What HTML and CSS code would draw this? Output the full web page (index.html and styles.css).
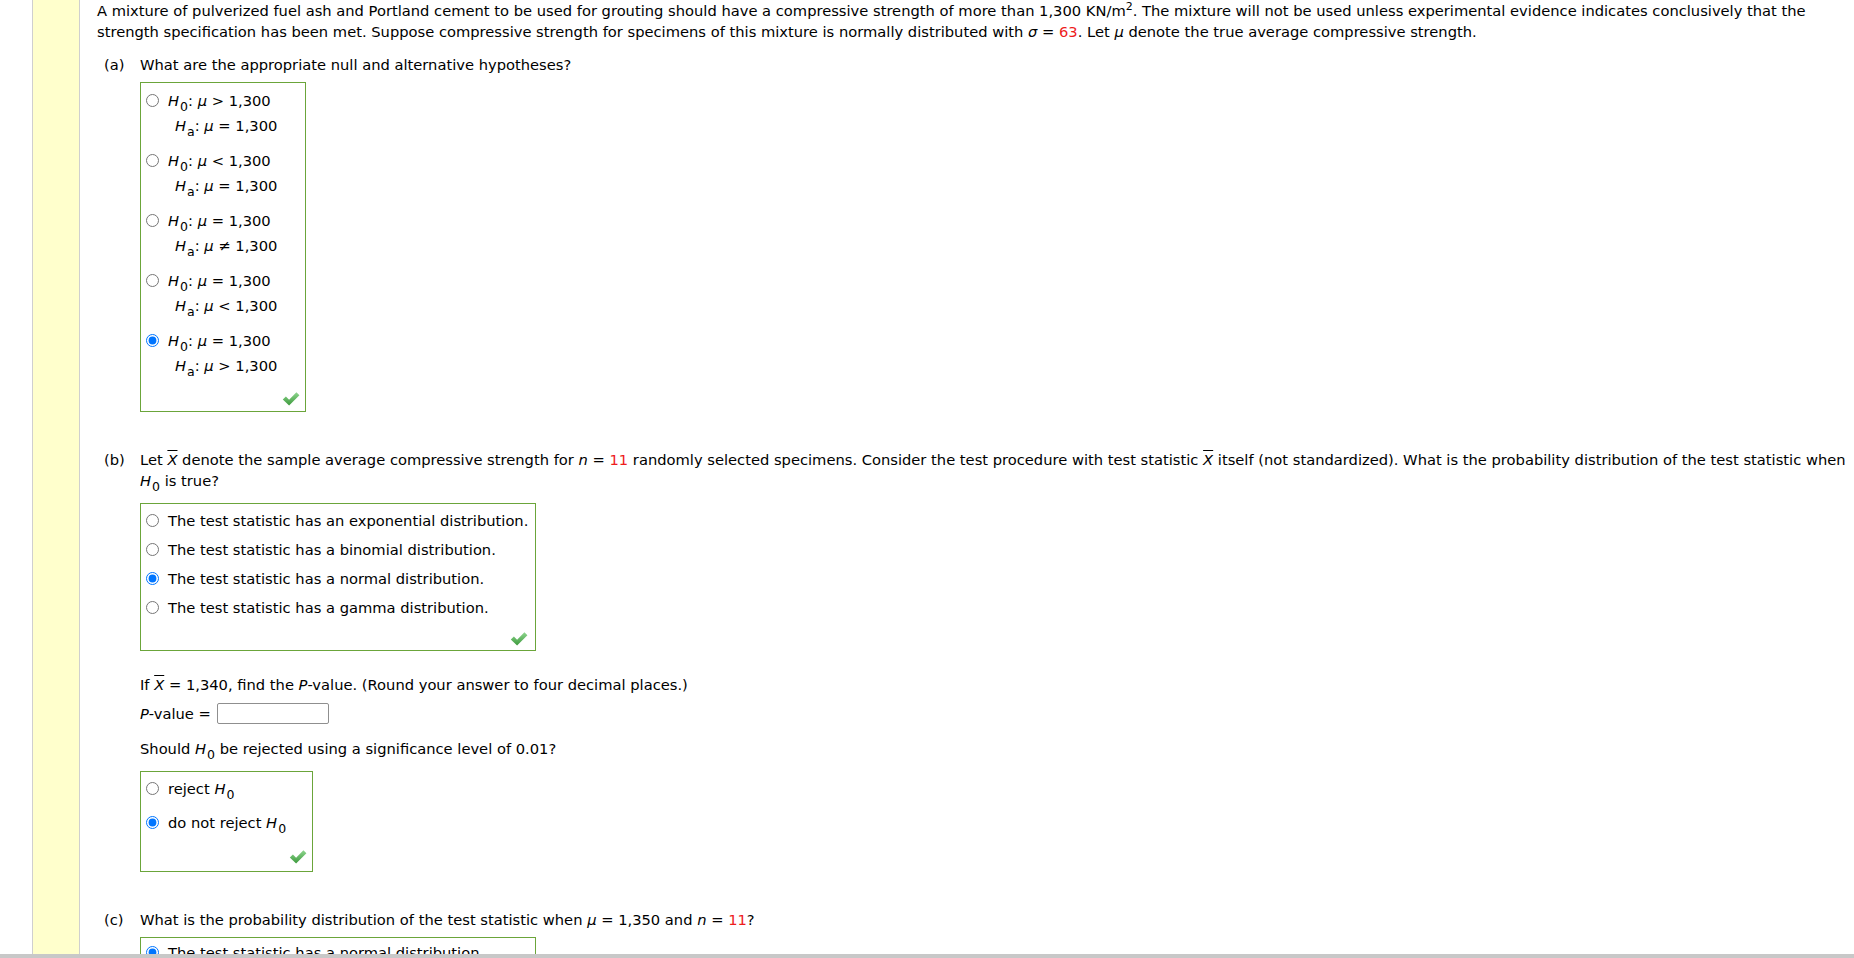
FILE: index.html
```html
<!DOCTYPE html>
<html lang="en">
<head>
<meta charset="utf-8">
<title>Hypothesis test question</title>
<link rel="stylesheet" href="styles.css">
</head>
<body>
<div class="page">
  <div class="gutter"></div>
  <div class="strip"></div>
  <main class="content">
    <p class="intro">A mixture of pulverized fuel ash and Portland cement to be used for grouting should have a compressive strength of more than 1,300 KN/m<sup>2</sup>. The mixture will not be used unless experimental evidence indicates conclusively that the strength specification has been met. Suppose compressive strength for specimens of this mixture is normally distributed with <i>σ</i> = <span class="red">63</span>. Let <i>μ</i> denote the true average compressive strength.</p>

    <section class="part part-a">
      <div class="part-label">(a)</div>
      <div class="part-body">
        <p class="q q-a">What are the appropriate null and alternative hypotheses?</p>
        <div class="choices hyp">
          <label class="opt"><input type="radio" name="a"><span class="lines"><span class="line"><i>H</i><sub>0</sub>: <i>μ</i> &gt; 1,300</span><span class="line ind"><i>H</i><sub>a</sub>: <i>μ</i> = 1,300</span></span></label>
          <label class="opt"><input type="radio" name="a"><span class="lines"><span class="line"><i>H</i><sub>0</sub>: <i>μ</i> &lt; 1,300</span><span class="line ind"><i>H</i><sub>a</sub>: <i>μ</i> = 1,300</span></span></label>
          <label class="opt"><input type="radio" name="a"><span class="lines"><span class="line"><i>H</i><sub>0</sub>: <i>μ</i> = 1,300</span><span class="line ind"><i>H</i><sub>a</sub>: <i>μ</i> ≠ 1,300</span></span></label>
          <label class="opt"><input type="radio" name="a"><span class="lines"><span class="line"><i>H</i><sub>0</sub>: <i>μ</i> = 1,300</span><span class="line ind"><i>H</i><sub>a</sub>: <i>μ</i> &lt; 1,300</span></span></label>
          <label class="opt"><input type="radio" name="a" checked><span class="lines"><span class="line"><i>H</i><sub>0</sub>: <i>μ</i> = 1,300</span><span class="line ind"><i>H</i><sub>a</sub>: <i>μ</i> &gt; 1,300</span></span></label>
          <div class="check-row"><svg class="check" width="18" height="15" viewBox="0 0 18 15"><defs><linearGradient id="g1" x1="0" y1="0" x2="0" y2="1"><stop offset="0" stop-color="#8fd68f"/><stop offset="1" stop-color="#3d9a3d"/></linearGradient></defs><path d="M0.8 8.6 L3.9 5.6 L7.1 8.7 L14.4 1.2 L17.4 4.2 L7.1 14.4 Z" fill="url(#g1)"/></svg></div>
        </div>
      </div>
    </section>

    <section class="part part-b">
      <div class="part-label">(b)</div>
      <div class="part-body">
        <p class="q">Let <span class="xbar">X</span> denote the sample average compressive strength for <i>n</i> = <span class="red">11</span> randomly selected specimens. Consider the test procedure with test statistic <span class="xbar">X</span> itself (not standardized). What is the probability distribution of the test statistic when <i>H</i><sub>0</sub> is true?</p>
        <div class="choices dist">
          <label class="opt"><input type="radio" name="b"><span>The test statistic has an exponential distribution.</span></label>
          <label class="opt"><input type="radio" name="b"><span>The test statistic has a binomial distribution.</span></label>
          <label class="opt"><input type="radio" name="b" checked><span>The test statistic has a normal distribution.</span></label>
          <label class="opt"><input type="radio" name="b"><span>The test statistic has a gamma distribution.</span></label>
          <div class="check-row"><svg class="check" width="18" height="15" viewBox="0 0 18 15"><defs><linearGradient id="g2" x1="0" y1="0" x2="0" y2="1"><stop offset="0" stop-color="#8fd68f"/><stop offset="1" stop-color="#3d9a3d"/></linearGradient></defs><path d="M0.8 8.6 L3.9 5.6 L7.1 8.7 L14.4 1.2 L17.4 4.2 L7.1 14.4 Z" fill="url(#g2)"/></svg></div>
        </div>

        <p class="q ifx">If <span class="xbar">X</span> = 1,340, find the <i>P</i>-value. (Round your answer to four decimal places.)</p>
        <div class="pval"><span><i>P</i>-value =</span><input class="pinput" type="text" aria-label="P-value"></div>
        <p class="q should">Should <i>H</i><sub>0</sub> be rejected using a significance level of 0.01?</p>
        <div class="choices rej">
          <label class="opt"><input type="radio" name="r"><span>reject <i>H</i><sub>0</sub></span></label>
          <label class="opt"><input type="radio" name="r" checked><span>do not reject <i>H</i><sub>0</sub></span></label>
          <div class="check-row"><svg class="check" width="18" height="15" viewBox="0 0 18 15"><defs><linearGradient id="g3" x1="0" y1="0" x2="0" y2="1"><stop offset="0" stop-color="#8fd68f"/><stop offset="1" stop-color="#3d9a3d"/></linearGradient></defs><path d="M0.8 8.6 L3.9 5.6 L7.1 8.7 L14.4 1.2 L17.4 4.2 L7.1 14.4 Z" fill="url(#g3)"/></svg></div>
        </div>
      </div>
    </section>

    <section class="part part-c">
      <div class="part-label">(c)</div>
      <div class="part-body">
        <p class="q q-c">What is the probability distribution of the test statistic when <i>μ</i> = 1,350 and <i>n</i> = <span class="red">11</span>?</p>
        <div class="choices dist dist-c">
          <label class="opt"><input type="radio" name="c" checked><span>The test statistic has a normal distribution.</span></label>
          <label class="opt"><input type="radio" name="c"><span>The test statistic has a binomial distribution.</span></label>
          <label class="opt"><input type="radio" name="c"><span>The test statistic has an exponential distribution.</span></label>
          <label class="opt"><input type="radio" name="c"><span>The test statistic has a gamma distribution.</span></label>
        </div>
      </div>
    </section>
  </main>
</div>
<div class="hbar"></div>
</body>
</html>
```

FILE: styles.css
```css
html, body {
  margin: 0;
  height: 100%;
  overflow: hidden;
  background: #fff;
}

body {
  font-family: "DejaVu Sans", Verdana, sans-serif;
  font-size: 14.7px;
  color: #000;
}

.page {
  display: flex;
  min-height: 100%;
}

.gutter {
  width: 32px;
  flex: none;
}

.strip {
  width: 46px;
  flex: none;
  background: #ffffcc;
  border-left: 1px solid #cfcfcf;
  border-right: 1px solid #cfcfcf;
}

.content {
  flex: 1;
  min-width: 0;
  padding: 0 4px 0 17px;
}

p {
  margin: 0;
}

.intro {
  line-height: 21px;
}

.red {
  color: #ee1c1c;
}

i {
  font-style: italic;
}

sub {
  font-size: 12.5px;
  vertical-align: baseline;
  position: relative;
  top: 5px;
  line-height: 0;
  margin-left: 1px;
}

sup {
  font-size: 11px;
  vertical-align: baseline;
  position: relative;
  top: -6px;
  line-height: 0;
}

.xbar {
  font-style: italic;
  text-decoration: overline;
}

.part {
  display: flex;
}

.part-a {
  margin-top: 12px;
}

.part-b {
  margin-top: 37px;
}

.part-c {
  margin-top: 37px;
}

.part-label {
  width: 36px;
  padding-left: 7px;
  flex: none;
  line-height: 21px;
}

.part-body {
  flex: 1;
  min-width: 0;
}

.q {
  line-height: 21px;
}

.q-a {
  margin-bottom: 7px;
}

.q-c {
  margin-bottom: 7px;
}

.choices {
  border: 1px solid #6ba53a;
  box-sizing: border-box;
}

.opt {
  display: flex;
  align-items: flex-start;
  white-space: nowrap;
}

.opt input {
  flex: none;
  width: 13px;
  height: 13px;
  margin: 0 9px 0 5px;
}

.check-row {
  display: flex;
  justify-content: flex-end;
}

.check {
  display: block;
}

/* (a) hypotheses box */
.hyp {
  width: 166px;
  padding: 5px 5px 5px 0;
}

.hyp .opt + .opt {
  margin-top: 10px;
}

.hyp .opt input {
  margin-top: 6px;
}

.lines {
  display: flex;
  flex-direction: column;
}

.line {
  height: 25px;
  line-height: 25px;
}

.line.ind {
  padding-left: 7px;
}

.hyp .check-row {
  margin-top: 13px;
}

/* distribution boxes */
.dist {
  width: fit-content;
  padding: 2px 7px 4px 0;
  margin-top: 12px;
}

.dist .opt {
  line-height: 29px;
}

.dist .opt input {
  margin-top: 8px;
}

.dist .check-row {
  margin-top: 9px;
}

.dist-c {
  margin-top: 0;
  padding-top: 0;
}

/* P-value */
.ifx {
  margin-top: 23px;
}

.pval {
  display: flex;
  align-items: center;
  height: 24px;
  margin-top: 6px;
}

.pinput {
  width: 112px;
  height: 21px;
  box-sizing: border-box;
  border: 1px solid #8f8f8f;
  border-radius: 2px;
  margin: 0 0 0 6px;
  padding: 0 3px;
  font: inherit;
}

.should {
  margin-top: 13px;
}

/* reject box */
.rej {
  width: 173px;
  padding: 0 5px 7px 0;
  margin-top: 12px;
}

.rej .opt {
  line-height: 34px;
}

.rej .opt input {
  margin-top: 10px;
}

.rej .check-row {
  margin-top: 9px;
}

.hbar {
  position: fixed;
  left: 0;
  right: 0;
  bottom: 0;
  height: 4px;
  background: #c8c8c8;
}
```
